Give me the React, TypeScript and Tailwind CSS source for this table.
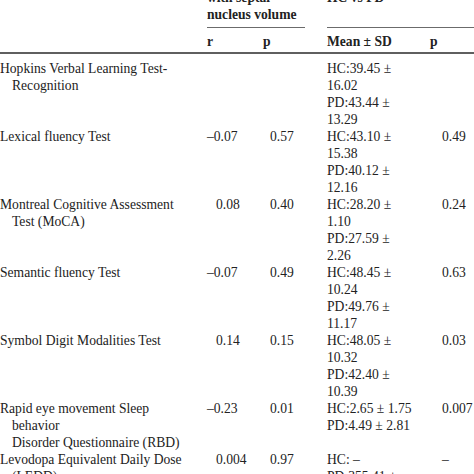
type Row = {
  label: string[];
  r: string;
  p: string;
  mean: string[];
  p2: string;
};

const rows: Row[] = [
  {
    label: ["Hopkins Verbal Learning Test-", "Recognition"],
    r: "",
    p: "",
    mean: ["HC:39.45 ±", "16.02", "PD:43.44 ±", "13.29"],
    p2: "",
  },
  {
    label: ["Lexical fluency Test"],
    r: "–0.07",
    p: "0.57",
    mean: ["HC:43.10 ±", "15.38", "PD:40.12 ±", "12.16"],
    p2: "0.49",
  },
  {
    label: ["Montreal Cognitive Assessment", "Test (MoCA)"],
    r: "0.08",
    p: "0.40",
    mean: ["HC:28.20 ±", "1.10", "PD:27.59 ±", "2.26"],
    p2: "0.24",
  },
  {
    label: ["Semantic fluency Test"],
    r: "–0.07",
    p: "0.49",
    mean: ["HC:48.45 ±", "10.24", "PD:49.76 ±", "11.17"],
    p2: "0.63",
  },
  {
    label: ["Symbol Digit Modalities Test"],
    r: "0.14",
    p: "0.15",
    mean: ["HC:48.05 ±", "10.32", "PD:42.40 ±", "10.39"],
    p2: "0.03",
  },
  {
    label: ["Rapid eye movement Sleep", "behavior", "Disorder Questionnaire (RBD)"],
    r: "–0.23",
    p: "0.01",
    mean: ["HC:2.65 ± 1.75", "PD:4.49 ± 2.81"],
    p2: "0.007",
  },
  {
    label: ["Levodopa Equivalent Daily Dose", "(LEDD)"],
    r: "0.004",
    p: "0.97",
    mean: ["HC: –", "PD:355.41 ±"],
    p2: "–",
  },
];

function Lines({ items }: { items: string[] }) {
  return (
    <>
      {items.map((t, i) => (
        <div key={i} className="whitespace-nowrap">
          {t}
        </div>
      ))}
    </>
  );
}

export default function App() {
  return (
    <div className="h-[474px] w-[474px] overflow-hidden bg-white font-['Liberation_Serif',serif] text-[13.6px] leading-[17px] text-[#222]">
      <div className="-mt-[11px]">
        {/* group headers */}
        <div className="grid grid-cols-[207px_120px_147px] items-end">
          <div />
          <div className="w-[98px] border-b-[1.5px] border-[#6b6b6b] pb-[4px] font-bold">
            <div className="whitespace-nowrap">with septal</div>
            <div className="whitespace-nowrap">nucleus volume</div>
          </div>
          <div className="border-b-[1.5px] border-[#6b6b6b] pb-[4px] font-bold">
            <div className="whitespace-nowrap">HC vs PD</div>
            <div className="h-[17px]" />
          </div>
        </div>

        {/* column headers */}
        <div className="grid grid-cols-[207px_56px_64px_103px_44px] border-b-2 border-[#5f5f5f] pt-[5px] pb-[2px] font-bold">
          <div />
          <div>r</div>
          <div>p</div>
          <div className="whitespace-nowrap">Mean ± SD</div>
          <div>p</div>
        </div>

        {/* body */}
        <div className="pt-[6px]">
          {rows.map((row, i) => (
            <div key={i} className="grid grid-cols-[207px_56px_64px_103px_44px]">
              <div>
                {row.label.map((t, j) => (
                  <div key={j} className={j === 0 ? "whitespace-nowrap" : "whitespace-nowrap pl-[12px]"}>
                    {t}
                  </div>
                ))}
              </div>
              <div className={row.r.startsWith("–") ? "" : "pl-[9px]"}>{row.r}</div>
              <div className="pl-[7px]">{row.p}</div>
              <div>
                <Lines items={row.mean} />
              </div>
              <div className="pl-[12px]">{row.p2}</div>
            </div>
          ))}
        </div>
      </div>
    </div>
  );
}
